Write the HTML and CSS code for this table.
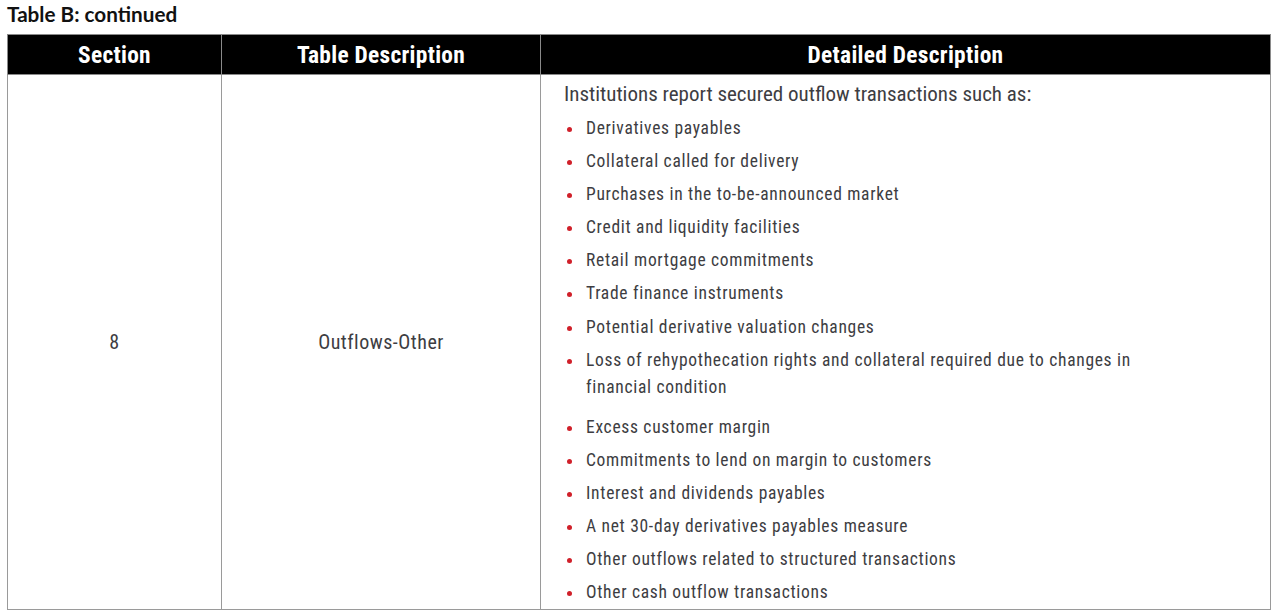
FILE: index.html
```html
<!DOCTYPE html>
<html>
<head>
<meta charset="utf-8">
<link rel="stylesheet" href="styles.css">
</head>
<body>
<div class="page">
  <div class="caption">Table B: continued</div>
  <table class="tbl">
    <colgroup>
      <col class="c1">
      <col class="c2">
      <col class="c3">
    </colgroup>
    <thead>
      <tr>
        <th>Section</th>
        <th>Table Description</th>
        <th>Detailed Description</th>
      </tr>
    </thead>
    <tbody>
      <tr>
        <td class="center">8</td>
        <td class="center">Outflows-Other</td>
        <td class="detail">
          <p class="lead">Institutions report secured outflow transactions such as:</p>
          <ul class="bullets">
            <li>Derivatives payables</li>
            <li>Collateral called for delivery</li>
            <li>Purchases in the to-be-announced market</li>
            <li>Credit and liquidity facilities</li>
            <li>Retail mortgage commitments</li>
            <li>Trade finance instruments</li>
            <li>Potential derivative valuation changes</li>
            <li class="wrap">Loss of rehypothecation rights and collateral required due to changes in financial condition</li>
            <li>Excess customer margin</li>
            <li>Commitments to lend on margin to customers</li>
            <li>Interest and dividends payables</li>
            <li>A net 30-day derivatives payables measure</li>
            <li>Other outflows related to structured transactions</li>
            <li>Other cash outflow transactions</li>
          </ul>
        </td>
      </tr>
    </tbody>
  </table>
</div>
</body>
</html>
```
FILE: styles.css
```css
html, body {
  margin: 0;
  padding: 0;
  background: #fff;
}
.page {
  padding: 2px 10px 0 7px;
}
.caption {
  font-family: Lato, "Open Sans", sans-serif;
  font-weight: 700;
  font-size: 20.7px;
  line-height: 24px;
  color: #111;
  margin-bottom: 8px;
}
.tbl {
  width: 1263px;
  border-collapse: collapse;
  table-layout: fixed;
  font-family: Roboto, sans-serif;
  font-stretch: 75%;
}
.c1 { width: 214px; }
.c2 { width: 319px; }
.c3 { width: 730px; }
.tbl th {
  background: #000;
  color: #fff;
  font-weight: 700;
  font-size: 23.4px;
  height: 39px;
  padding: 0;
  border: 1px solid #8a8a8a;
  text-align: center;
  letter-spacing: 0.3px;
}
.tbl td {
  border: 1px solid #9a9a9a;
  color: #3d3d42;
  font-size: 20px;
  vertical-align: middle;
  padding: 0;
}
.tbl td.center {
  text-align: center;
  letter-spacing: 0.5px;
}
.tbl td.detail {
  padding: 6px 20px 3px 23px;
  vertical-align: top;
}
.lead {
  margin: 0;
  font-size: 21px;
  line-height: 26px;
}
.bullets {
  list-style: none;
  margin: 8px 0 0 0;
  padding: 0;
  font-size: 17.5px;
  letter-spacing: 0.7px;
  line-height: 27px;
}
.bullets li {
  position: relative;
  padding-left: 22px;
  margin-bottom: 6.1px;
}
.bullets li::before {
  content: "";
  position: absolute;
  left: 3px;
  top: 12px;
  width: 5px;
  height: 5px;
  border-radius: 50%;
  background: #d0202a;
}
.bullets li.wrap {
  width: 570px;
  margin-bottom: 13px;
}
.bullets li:last-child {
  margin-bottom: 0;
}
```
